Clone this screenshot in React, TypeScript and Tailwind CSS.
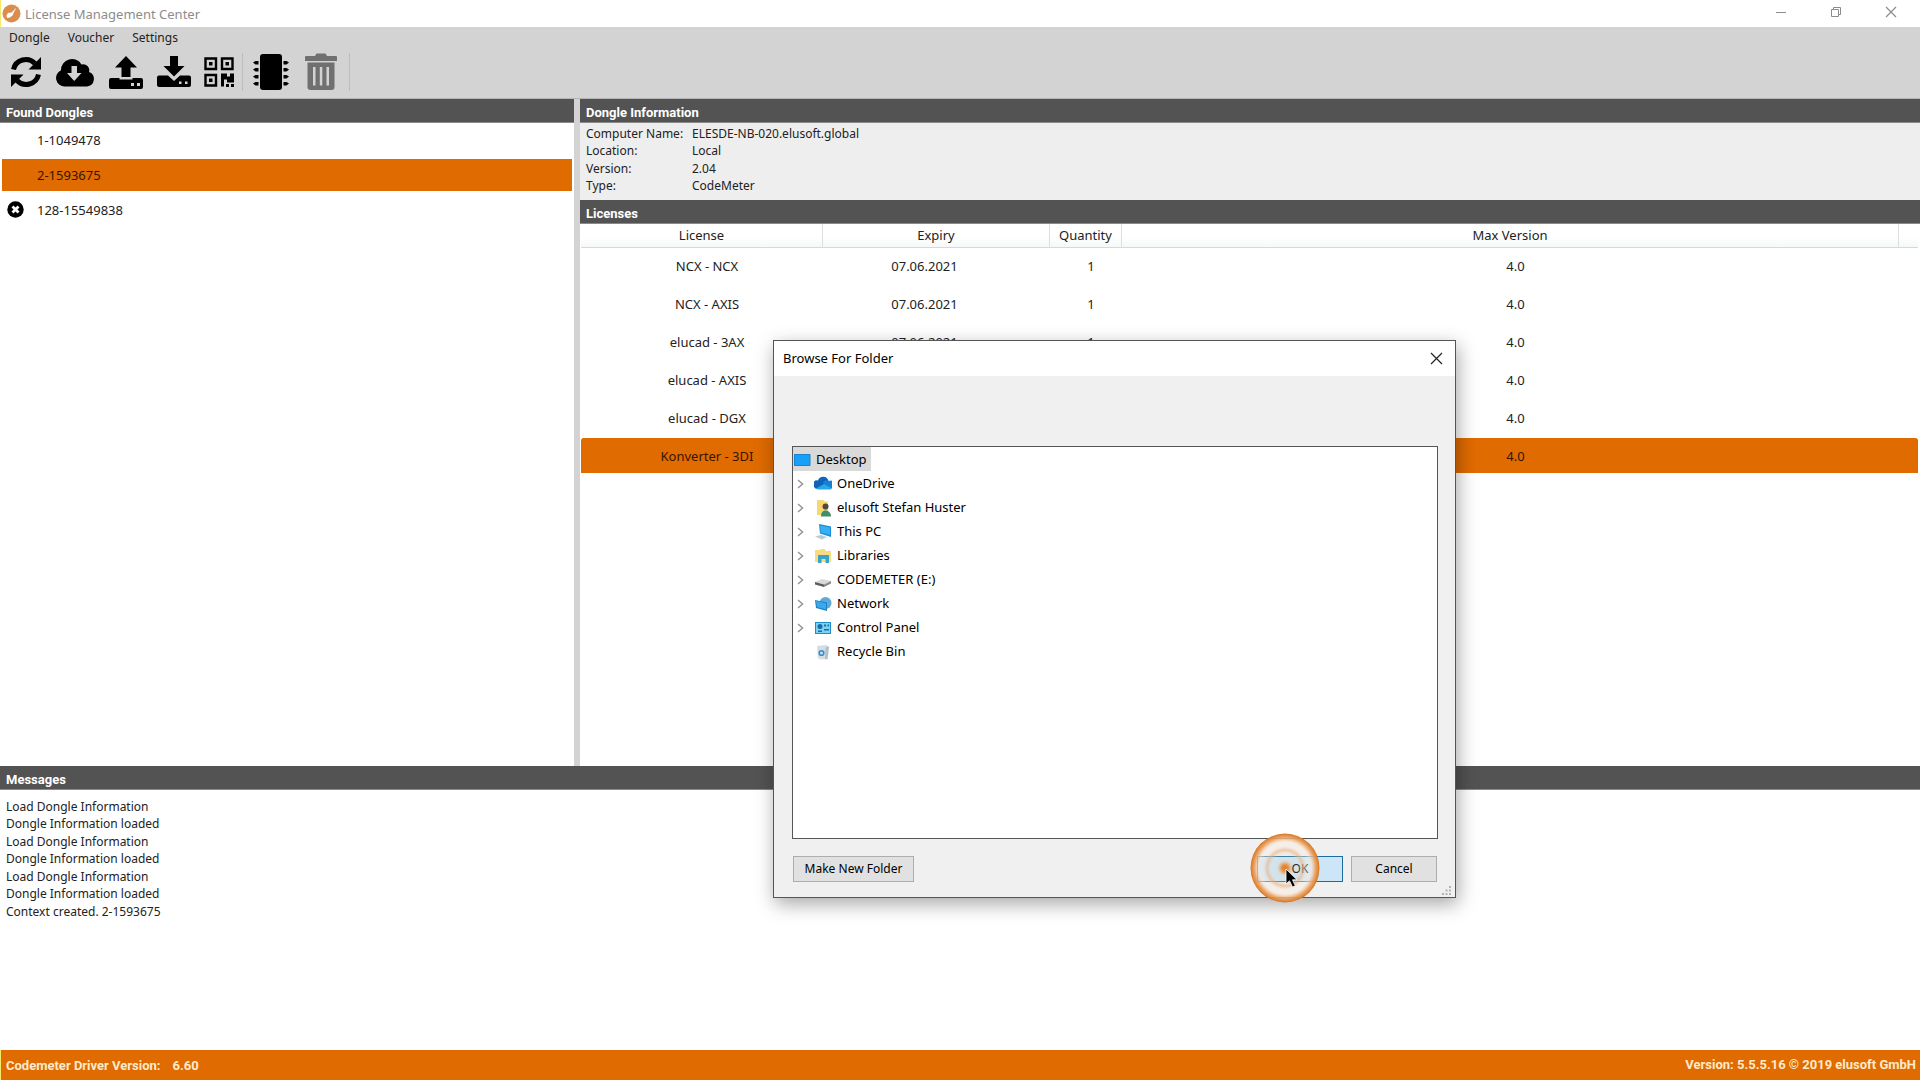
import { useState } from 'react';
import type { ReactNode } from 'react';

const DONGLES = [
  { id: '1-1049478', invalid: false },
  { id: '2-1593675', invalid: false },
  { id: '128-15549838', invalid: true },
];

const DONGLE_INFO = [
  ['Computer Name:', 'ELESDE-NB-020.elusoft.global'],
  ['Location:', 'Local'],
  ['Version:', '2.04'],
  ['Type:', 'CodeMeter'],
];

const LICENSES = ['NCX - NCX', 'NCX - AXIS', 'elucad - 3AX', 'elucad - AXIS', 'elucad - DGX', 'Konverter - 3DI'];

const MESSAGES = [
  'Load Dongle Information',
  'Dongle Information loaded',
  'Load Dongle Information',
  'Dongle Information loaded',
  'Load Dongle Information',
  'Dongle Information loaded',
  'Context created. 2-1593675',
];

const RefreshIcon = () => (
  <svg width="32" height="32" viewBox="0 0 32 32">
    <path d="M3.5 13.5A12.6 12.6 0 0 1 25 7.5M28.5 18.5A12.6 12.6 0 0 1 7 24.5" fill="none" stroke="#000" strokeWidth="5" />
    <path d="M31 1v12.5H18.5zM1 31V18.5h12.5z" />
  </svg>
);

const CloudIcon = () => (
  <svg width="39" height="29" viewBox="0 0 39 29">
    <path d="M9 28.5a8.500 8.500 0 0 1-4-16.200A11 11 0 0 1 25.500 6.500 6 6 0 0 1 33 14a7.500 7.500 0 0 1-2 14.500z" />
    <path d="M15.500 8h5.500v7h4.500L18.200 23 11 15h4.500z" fill="#d3d3d3" />
  </svg>
);

const UploadIcon = () => (
  <svg width="34" height="33" viewBox="0 0 34 33">
    <path d="M17 0l11 11.500h-6.500V21h-9v-9.500H6z" />
    <path d="M2 22h8.500v1.500h13V22H32a2 2 0 0 1 2 2v7a2 2 0 0 1-2 2H2a2 2 0 0 1-2-2v-7a2 2 0 0 1 2-2z" />
    <path d="M22 27h3v3h-3zM28 27h3v3h-3z" fill="#d3d3d3" />
  </svg>
);

const DownloadIcon = () => (
  <svg width="34" height="33" viewBox="0 0 34 33">
    <path d="M13 0h8v10h6.500L17 20.500 6.500 10H13z" />
    <path d="M2 19.500h9l6 5.500 6-5.500h9a2 2 0 0 1 2 2V29a2 2 0 0 1-2 2H2a2 2 0 0 1-2-2v-7.500a2 2 0 0 1 2-2z" />
    <path d="M22 25.500h2.500V28H22zM28 25.500h2.500V28H28z" fill="#d3d3d3" />
  </svg>
);

const QrIcon = () => (
  <svg width="30" height="30" viewBox="0 0 30 30">
    <path d="M1.500 1.500h10.500v10.500H1.500zM18 1.500h10.500v10.500H18zM1.500 18h10.500v10.500H1.500z" fill="none" stroke="#000" strokeWidth="2.400" />
    <path d="M5 5h3.500v3.500H5zM21.500 5H25v3.500h-3.500zM5 21.500h3.500V25H5z" />
    <path d="M17 16.500h6v3h3v-3h4v9h-7v-3h-3v7h-3zM22 27h3v3h-3zM27 27h3v3h-3z" />
  </svg>
);

const ChipIcon = () => (
  <svg width="38" height="38" viewBox="0 0 38 38">
    <rect x="8" y="1" width="22" height="36" rx="3" />
    {[8, 15, 22, 29].map(y => (
      <path key={y} d={`M1 ${y + 1.5}l2.500-1.500H6.500v3.500H3.500zM37 ${y + 1.5}l-2.500-1.500H31.500v3.500h3z`} />
    ))}
  </svg>
);

const TrashIcon = () => (
  <svg width="32" height="38" viewBox="0 0 32 38" fill="#707070">
    <path d="M1 3h9l1.500-2.500h9L22 3h9a1 1 0 0 1 1 1v4H0V4a1 1 0 0 1 1-1z" />
    <path d="M2.500 9.500h27V34a3 3 0 0 1-3 3h-21a3 3 0 0 1-3-3z" />
    <path d="M8 14h2.500v18.500H8zM14.800 14h2.500v18.500h-2.500zM21.500 14H24v18.500h-2.500z" fill="#d3d3d3" />
  </svg>
);

const TOOLS: { label: string; icon: ReactNode; cls: string }[] = [
  { label: 'Refresh', icon: <RefreshIcon />, cls: 'ml-[10px]' },
  { label: 'Load from cloud', icon: <CloudIcon />, cls: 'ml-[14px]' },
  { label: 'Upload', icon: <UploadIcon />, cls: 'ml-[14px]' },
  { label: 'Download', icon: <DownloadIcon />, cls: 'ml-[14px]' },
  { label: 'QR code', icon: <QrIcon />, cls: 'ml-[13px]' },
];

const TREE: { label: string; icon: ReactNode; leaf?: boolean }[] = [
  {
    label: 'OneDrive',
    icon: (
      <>
        <path d="M0 12a4 4 0 0 1 4-6.500A5.500 5.500 0 0 1 14.500 6L17 9 9 14H4a4 4 0 0 1-4-2z" fill="#0f64b8" />
        <path d="M9 7a5 5 0 0 1 6-1 3.800 3.800 0 0 1 3 7.500L11 12z" fill="#1680d8" />
        <path d="M2 13.500L10 9l8 4.500a3 3 0 0 1-2 1H5a3 3 0 0 1-3-1z" fill="#28a8ea" />
      </>
    ),
  },
  {
    label: 'elusoft Stefan Huster',
    icon: (
      <>
        <path d="M3 1h6l2 1.500h3V16H3z" fill="#f7d774" />
        <circle cx="11.500" cy="7.500" r="3" fill="#57473b" />
        <path d="M7 17.500c0-4 2-6 4.500-6S17 13.500 17 17.500z" fill="#3f8f68" />
      </>
    ),
  },
  {
    label: 'This PC',
    icon: (
      <>
        <path d="M5 1l12 2.500V14L6 10.500z" fill="#1d8ad6" />
        <path d="M6 2.500l10 2v7.500L7 9.500z" fill="#36b0f4" />
        <path d="M1 13.500l6-1.500 6 2-5 2.500z" fill="#b9cbd8" />
      </>
    ),
  },
  {
    label: 'Libraries',
    icon: (
      <>
        <path d="M1 3h5l1-1h4l1 2h5v11H1z" fill="#f9dc82" />
        <path d="M4 8h11v8h-3.500v-4h-4v4H4z" fill="#3aa3c9" />
      </>
    ),
  },
  {
    label: 'CODEMETER (E:)',
    icon: (
      <>
        <path d="M1 11l7-3 9 2-7 3.500z" fill="#d9d9d9" />
        <path d="M1 11l9 2.500V16l-9-2.500z" fill="#5c5c5c" />
        <path d="M10 13.500l7-3.500v2.500L10 16z" fill="#8b8b8b" />
      </>
    ),
  },
  {
    label: 'Network',
    icon: (
      <>
        <circle cx="11.500" cy="8" r="6" fill="#5da9d8" />
        <path d="M1 5l12 2.500V16L2 13z" fill="#1d7fc4" />
        <path d="M2 6l10 2.200v6.300L3 12z" fill="#39a9ec" />
      </>
    ),
  },
  {
    label: 'Control Panel',
    icon: (
      <>
        <path d="M1 3h16v12H1z" fill="#1c8fc9" />
        <path d="M2 4h14v10H2z" fill="#7fd0f5" />
        <circle cx="6" cy="7.500" r="2.500" fill="#156fa8" />
        <path d="M10 5.500h2v2h-2zM13.500 5.500H15v2h-1.500zM10 10h5v1.500h-5zM4 11.500h4V13H4z" fill="#156fa8" />
      </>
    ),
  },
  {
    label: 'Recycle Bin',
    leaf: true,
    icon: (
      <>
        <path d="M3 3l9-1 3 1.500L13.500 16 6 16.500 4 15z" fill="#d5dde2" />
        <path d="M11.500 4.500L15 3.500 13.500 16l-2.500.4z" fill="#b4bfc6" />
        <circle cx="7.500" cy="10" r="2.300" fill="none" stroke="#2b8fd6" strokeWidth="1.600" />
      </>
    ),
  },
];

function PanelHeader({ children }: { children: ReactNode }) {
  return (
    <h2 className="h-6 shrink-0 border-b border-[#8a8a8a] bg-[#535353] pl-[6px] font-['Roboto',Arial,sans-serif] text-[13px] leading-[27px] font-bold text-white">
      {children}
    </h2>
  );
}

function TitleBar() {
  return (
    <header className="flex h-[27px] shrink-0 items-center border-l border-[#f3ea6b] bg-white">
      <svg className="ml-px" width="19" height="19" viewBox="0 0 19 19">
        <circle cx="9.500" cy="9.500" r="9" fill="#d98e4e" />
        <path d="M14.500 3.500L9.500 8.500 6 9l-1.500 2.500L5 14l3-.5 3-2.500.5-2z" fill="#fff" />
      </svg>
      <h1 className="ml-1 flex-1 pt-px text-[13px] leading-[27px] text-[#8c8c8c]">License Management Center</h1>
      <div className="mr-[23px] flex items-center gap-[43px] pb-[3px]">
        <button aria-label="Minimize">
          <svg width="12" height="12" viewBox="0 0 12 12" stroke="#8c8c8c"><path d="M1 6.500h10" /></svg>
        </button>
        <button aria-label="Restore">
          <svg width="12" height="12" viewBox="0 0 12 12" stroke="#8c8c8c" fill="none"><path d="M1.500 3.500h7v7h-7zM3.500 3.500v-2h7v7h-2" /></svg>
        </button>
        <button aria-label="Close">
          <svg width="12" height="12" viewBox="0 0 12 12" stroke="#8c8c8c" strokeWidth="1.200"><path d="M1 1l10 10M11 1L1 11" /></svg>
        </button>
      </div>
    </header>
  );
}

function Toolbar() {
  return (
    <div className="h-[72px] shrink-0 border-b border-[#b5b5b5] bg-[#d3d3d3]">
      <nav className="flex h-[21px] items-center gap-[18px] pl-[9px] text-[12px] text-[#222]">
        <button>Dongle</button>
        <button>Voucher</button>
        <button>Settings</button>
      </nav>
      <div className="flex h-12 items-center">
        {TOOLS.map(tool => (
          <button key={tool.label} aria-label={tool.label} className={tool.cls}>{tool.icon}</button>
        ))}
        <div className="ml-2 h-[38px] w-px bg-[#bdbdbd]" />
        <button aria-label="Dongle chip" className="ml-[9px]"><ChipIcon /></button>
        <button aria-label="Delete" className="ml-[15px]"><TrashIcon /></button>
        <div className="ml-3 h-[38px] w-px bg-[#bdbdbd]" />
      </div>
    </div>
  );
}

function DongleList() {
  const [selected, setSelected] = useState('2-1593675');

  return (
    <section className="flex w-[574px] shrink-0 flex-col bg-white">
      <PanelHeader>Found Dongles</PanelHeader>
      <ul className="flex flex-col gap-[3px] px-[2px] pt-px">
        {DONGLES.map(d => (
          <li key={d.id}>
            <button
              onClick={() => setSelected(d.id)}
              className={`flex h-8 w-full items-center pt-[2px] pl-[5px] text-[13px] ${selected === d.id ? 'bg-[#e06b00] text-[#3a1400]' : 'text-[#222]'}`}
            >
              <span className="w-[30px] pb-[3px]">
                {d.invalid && (
                  <svg width="17" height="17" viewBox="0 0 17 17">
                    <circle cx="8.500" cy="8.500" r="8.200" />
                    <path d="M5.500 5.500l6 6M11.500 5.500l-6 6" stroke="#fff" strokeWidth="2.800" />
                  </svg>
                )}
              </span>
              {d.id}
            </button>
          </li>
        ))}
      </ul>
    </section>
  );
}

function LicenseTable() {
  return (
    <div className="pr-[2px] pl-px">
      <table className="w-full table-fixed border-separate border-spacing-0 text-[13px] text-[#222]">
        <colgroup>
          <col className="w-[242px]" />
          <col className="w-[227px]" />
          <col className="w-[72px]" />
          <col />
          <col className="w-[19px]" />
        </colgroup>
        <thead>
          <tr className="h-6 bg-linear-to-b from-white from-50% to-[#f6f8f8]">
            {['License', 'Expiry', 'Quantity', 'Max Version'].map(h => (
              <th key={h} scope="col" className="border-r border-b border-r-[#dcdfde] border-b-[#d5d9d8] p-0 pb-[2px] leading-5 font-normal">{h}</th>
            ))}
            <td className="border-b border-[#d5d9d8] p-0" />
          </tr>
        </thead>
        <tbody>
          {LICENSES.map(name => {
            const bg = name === 'Konverter - 3DI' ? 'bg-[#e06b00] bg-clip-padding text-[#3a1400]' : '';
            return (
              <tr key={name} className="h-[38px] text-center">
                <td className={`rounded-l-xs border-b-[3px] border-transparent p-0 pt-[2px] pl-[10px] ${bg}`}>{name}</td>
                <td className={`border-b-[3px] border-transparent p-0 pt-[2px] pr-6 ${bg}`}>07.06.2021</td>
                <td className={`border-b-[3px] border-transparent p-0 pt-[2px] pl-[10px] ${bg}`}>1</td>
                <td className={`border-b-[3px] border-transparent p-0 pt-[2px] pl-[10px] ${bg}`}>4.0</td>
                <td className={`rounded-r-xs border-b-[3px] border-transparent p-0 ${bg}`} />
              </tr>
            );
          })}
        </tbody>
      </table>
    </div>
  );
}

function ClickMarker() {
  return (
    <svg className="pointer-events-none absolute -top-[23px] -left-[7px]" width="70" height="70" viewBox="0 0 70 70">
      <defs>
        <radialGradient id="ring">
          <stop offset="0" stopColor="#e07a1c" />
          <stop offset=".1" stopColor="#e58a38" stopOpacity=".9" />
          <stop offset=".24" stopColor="#f2c79c" stopOpacity=".15" />
          <stop offset=".4" stopColor="#f2d9c0" stopOpacity=".2" />
          <stop offset=".52" stopColor="#eab78a" stopOpacity=".7" />
          <stop offset=".64" stopColor="#fbeee2" stopOpacity=".35" />
          <stop offset=".76" stopColor="#fbe9da" stopOpacity=".6" />
          <stop offset=".88" stopColor="#e9a263" stopOpacity=".9" />
          <stop offset="1" stopColor="#db741c" />
        </radialGradient>
      </defs>
      <circle cx="35" cy="35" r="34.500" fill="url(#ring)" />
      <path d="M36 36v15l3.500-3.200 3 6.200 2.800-1.200-2.800-6h4.500z" fill="#000" stroke="#fff" strokeWidth=".8" />
    </svg>
  );
}

function BrowseDialog() {
  const [current, setCurrent] = useState('Desktop');

  return (
    <div
      role="dialog"
      aria-labelledby="browse-title"
      className="absolute top-[340px] left-[773px] flex w-[683px] flex-col border border-[#555] bg-[#f0f0f0] text-black shadow-[2px_6px_18px_rgba(0,0,0,0.35)]"
    >
      <div className="flex h-[35px] items-center justify-between bg-white pr-3 pl-[9px]">
        <h2 id="browse-title" className="text-[13px]">Browse For Folder</h2>
        <button aria-label="Close dialog">
          <svg width="13" height="13" viewBox="0 0 13 13" stroke="#222" strokeWidth="1.200"><path d="M1 1l11 11M12 1L1 12" /></svg>
        </button>
      </div>
      <div className="mt-[70px] mr-[17px] ml-[18px] h-[393px] border border-[#555] bg-white text-[13px]">
        <button
          onClick={() => setCurrent('Desktop')}
          className={`flex h-6 items-center gap-[5px] pt-px pr-1 pl-px ${current === 'Desktop' ? 'bg-[#d9d9d9]' : ''}`}
        >
          <svg width="17" height="18" viewBox="0 0 17 18"><path d="M.5 3.500h15.500v11H.5z" fill="#18a0f8" stroke="#1583cf" /></svg>
          Desktop
        </button>
        <ul>
          {TREE.map(node => (
            <li key={node.label}>
              <button onClick={() => setCurrent(node.label)} className={`flex h-6 items-center pt-px pr-1 pl-1 ${current === node.label ? 'bg-[#d9d9d9]' : ''}`}>
                <svg width="8" height="12" viewBox="0 0 8 12" fill="none" stroke="#9a9a9a" strokeWidth="1.600">
                  {!node.leaf && <path d="M1 2l4.500 4L1 10" />}
                </svg>
                <svg className="mr-[5px] ml-[9px]" width="18" height="18" viewBox="0 0 18 18">{node.icon}</svg>
                {node.label}
              </button>
            </li>
          ))}
        </ul>
      </div>
      <div className="flex gap-2 pt-[17px] pr-[18px] pb-[15px] pl-[19px] text-[12px]">
        <button className="h-[26px] w-[121px] border border-[#adadad] bg-[#e1e1e1]">Make New Folder</button>
        <div className="relative ml-auto">
          <button className="h-[26px] w-[86px] border border-[#1a6d9e] bg-[#cce6f8]">OK</button>
          <ClickMarker />
        </div>
        <button className="h-[26px] w-[86px] border border-[#adadad] bg-[#e1e1e1]">Cancel</button>
      </div>
      <svg className="absolute right-[3px] bottom-px" width="10" height="10" viewBox="0 0 10 10" fill="#b4b4b4">
        <path d="M7 0h2v2H7zM7 3.500h2v2H7zM7 7h2v2H7zM3.500 3.500h2v2h-2zM3.500 7h2v2h-2zM0 7h2v2H0z" />
      </svg>
    </div>
  );
}

export default function App() {
  return (
    <div className="relative flex min-h-screen flex-col bg-white font-['Noto_Sans','Open_Sans',sans-serif]">
      <TitleBar />
      <Toolbar />

      <main className="flex flex-1">
        <DongleList />
        <div className="w-[6px] shrink-0 bg-[#d3d3d3]" />
        <section className="flex min-w-0 flex-1 flex-col">
          <PanelHeader>Dongle Information</PanelHeader>
          <dl className="h-[77px] bg-[#eee] pt-[2px] pl-[6px] text-[12px] text-[#222]">
            {DONGLE_INFO.map(([label, value]) => (
              <div key={label} className="flex h-[17px] items-center even:h-[18px]">
                <dt className="w-[106px]">{label}</dt>
                <dd>{value}</dd>
              </div>
            ))}
          </dl>
          <PanelHeader>Licenses</PanelHeader>
          <LicenseTable />
        </section>
      </main>

      <section className="h-[284px] shrink-0">
        <PanelHeader>Messages</PanelHeader>
        <ul className="pt-2 pl-[6px] text-[12px] text-[#222]">
          {MESSAGES.map((msg, i) => (
            <li key={i} className="flex h-[17px] items-center even:h-[18px]">{msg}</li>
          ))}
        </ul>
      </section>

      <footer className="flex h-[30px] shrink-0 items-center justify-between border-l border-[#f3ea6b] bg-[#e06b00] pr-1 pl-[5px] font-['Roboto',Arial,sans-serif] text-[13px] font-bold text-[#fdeacb]">
        <span className="pt-px">Codemeter Driver Version:<span className="ml-3">6.60</span></span>
        <span>Version: 5.5.5.16 © 2019 elusoft GmbH</span>
      </footer>

      <BrowseDialog />
    </div>
  );
}
